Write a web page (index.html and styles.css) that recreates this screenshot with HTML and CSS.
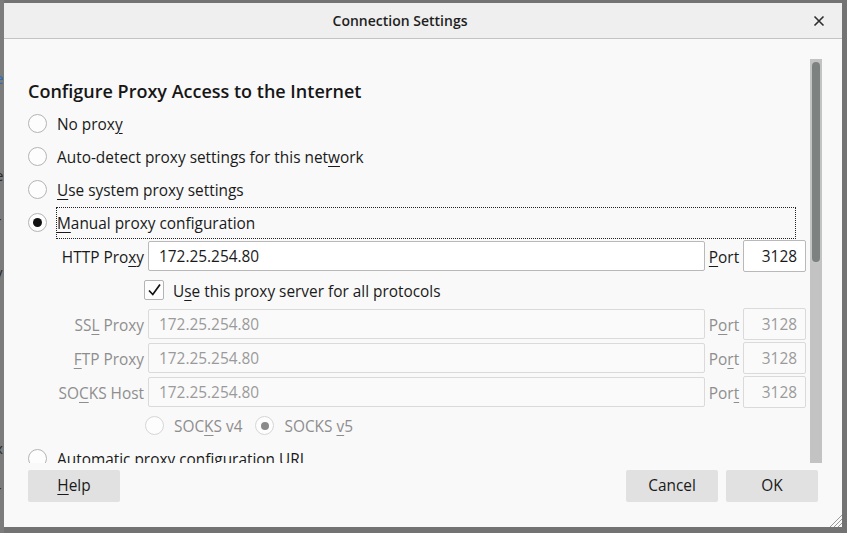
FILE: index.html
```html
<!DOCTYPE html>
<html>
<head>
<meta charset="utf-8">
<link rel="stylesheet" href="styles.css">
</head>
<body>
<div class="backdrop">
  <span class="frag f1">e</span>
  <span class="frag f2">(</span>
  <span class="frag f3">e</span>
  <span class="frag f4">r</span>
  <span class="frag f5">y</span>
  <span class="frag f6">x</span>
  <span class="frag f7">r</span>
</div>
<div class="dialog">
  <div class="titlebar">
    <span class="title">Connection Settings</span>
    <span class="close">
      <svg width="12" height="12" viewBox="0 0 12 12"><path d="M1.5 1.5 L10.5 10.5 M10.5 1.5 L1.5 10.5" stroke="#2e2e2e" stroke-width="1.6" fill="none"/></svg>
    </span>
  </div>
  <div class="body">
    <div class="scroll">
      <div class="content">
        <div class="row heading">Configure Proxy Access to the Internet</div>
        <div class="row"><span class="radio"></span><span class="lbl">No prox<u>y</u></span></div>
        <div class="row"><span class="radio"></span><span class="lbl">Auto-detect proxy settings for this net<u>w</u>ork</span></div>
        <div class="row"><span class="radio"></span><span class="lbl"><u>U</u>se system proxy settings</span></div>
        <div class="row"><span class="radio on"></span><span class="lbl focus"><u>M</u>anual proxy configuration</span></div>
        <div class="field">
          <span class="flabel">HTTP Pro<u>x</u>y</span>
          <span class="host">172.25.254.80</span>
          <span class="plabel"><u>P</u>ort</span>
          <span class="port">3128</span>
        </div>
        <div class="checkrow">
          <span class="check"><svg width="15" height="14" viewBox="0 0 15 14"><path d="M2 7.5 L5.8 11.5 L13 1.5" stroke="#111" stroke-width="1.7" fill="none"/></svg></span>
          <span class="lbl">U<u>s</u>e this proxy server for all protocols</span>
        </div>
        <div class="field dis">
          <span class="flabel">SS<u>L</u> Proxy</span>
          <span class="host">172.25.254.80</span>
          <span class="plabel">P<u>o</u>rt</span>
          <span class="port">3128</span>
        </div>
        <div class="field dis">
          <span class="flabel"><u>F</u>TP Proxy</span>
          <span class="host">172.25.254.80</span>
          <span class="plabel">Po<u>r</u>t</span>
          <span class="port">3128</span>
        </div>
        <div class="field dis">
          <span class="flabel">SO<u>C</u>KS Host</span>
          <span class="host">172.25.254.80</span>
          <span class="plabel">Por<u>t</u></span>
          <span class="port">3128</span>
        </div>
        <div class="socksrow">
          <span class="radio dis"></span><span class="lbl grey">SOC<u>K</u>S v4</span>
          <span class="radio dis ondis"></span><span class="lbl grey">SOCKS <u>v</u>5</span>
        </div>
        <div class="row"><span class="radio"></span><span class="lbl">Automatic proxy configuration URL</span></div>
      </div>
    </div>
    <div class="scrollbar"><div class="thumb"></div></div>
  </div>
  <div class="buttons">
    <button class="btn"><u>H</u>elp</button>
    <span class="spacer"></span>
    <button class="btn">Cancel</button>
    <button class="btn">OK</button>
  </div>
  <div class="grip">
    <svg width="14" height="14" viewBox="0 0 14 14"><path d="M14 2 L2 14 M14 6 L6 14 M14 10 L10 14" stroke="#9a9a9a" stroke-width="1" fill="none"/></svg>
  </div>
</div>
</body>
</html>
```
FILE: styles.css
```css
html, body {
  margin: 0;
  padding: 0;
}
body {
  width: 847px;
  height: 533px;
  background: #737373;
  font-family: "Open Sans", "Noto Sans", sans-serif;
  color: #1a1a1a;
  position: relative;
  overflow: hidden;
}
.backdrop {
  position: absolute;
  left: 0;
  top: 0;
  width: 4px;
  height: 533px;
  background: #7c7c7c;
  overflow: hidden;
}
.frag {
  position: absolute;
  left: -5px;
  font-size: 15px;
  color: #2a2a2a;
  line-height: 16px;
}
.f1 { top: 70px; color: #2a6ab8; }
.f2 { top: 122px; }
.f3 { top: 167px; }
.f4 { top: 213px; }
.f5 { top: 264px; }
.f6 { top: 440px; }
.f7 { top: 482px; }
.dialog {
  position: relative;
  margin: 3px 0 0 4px;
  width: 838px;
  height: 524px;
  background: #f9f9f9;
  display: flex;
  flex-direction: column;
}
.titlebar {
  height: 35px;
  flex: none;
  background: #efefef;
  border-bottom: 1px solid #c3c3c3;
  display: flex;
  align-items: center;
  justify-content: center;
  padding-right: 46px;
  position: relative;
}
.title {
  font-size: 14px;
  font-weight: 600;
  color: #1e1e1e;
}
.close {
  position: absolute;
  right: 17px;
  top: 12px;
  width: 12px;
  height: 12px;
  display: flex;
}
.body {
  flex: none;
  height: 424px;
  display: flex;
}
.scroll {
  flex: 1;
  overflow: hidden;
}
.content {
  padding: 35px 0 0 24px;
  width: 778px;
}
.row {
  height: 33px;
  display: flex;
  align-items: center;
  font-size: 15.4px;
}
.heading {
  font-size: 18px;
  font-weight: 600;
  color: #161616;
}
.radio {
  flex: none;
  width: 17px;
  height: 17px;
  border: 1px solid #b4b4b4;
  border-radius: 50%;
  background: #fdfdfd;
  position: relative;
  margin-right: 10px;
}
.radio.on::after {
  content: "";
  position: absolute;
  left: 4px;
  top: 4px;
  width: 9px;
  height: 9px;
  border-radius: 50%;
  background: #111;
}
.radio.dis {
  border-color: #d6d6d6;
}
.radio.ondis::after {
  content: "";
  position: absolute;
  left: 4.5px;
  top: 4.5px;
  width: 8px;
  height: 8px;
  border-radius: 50%;
  background: #8a8a8a;
}
.lbl {
  font-size: 15.4px;
  white-space: nowrap;
  padding-top: 2px;
}
.lbl u, .flabel u, .plabel u, .btn u {
  text-underline-offset: 3px;
}
.focus {
  width: 738px;
  height: 30px;
  line-height: 28px;
  outline: 1px dotted #222;
  box-sizing: border-box;
}
.field {
  height: 34px;
  display: flex;
  align-items: center;
  font-size: 15.4px;
  margin-left: 29px;
}
.flabel {
  width: 87px;
  text-align: right;
  margin-right: 4px;
  white-space: nowrap;
  padding-top: 2px;
}
.host {
  width: 557px;
  height: 30px;
  box-sizing: border-box;
  border: 1px solid #b9b9b9;
  border-radius: 2px;
  background: #fff;
  padding: 1px 0 0 10px;
  line-height: 28px;
}
.plabel {
  width: 38px;
  text-align: center;
  padding-top: 2px;
}
.port {
  width: 63px;
  height: 32px;
  box-sizing: border-box;
  border: 1px solid #b9b9b9;
  border-radius: 2px;
  background: #fff;
  text-align: right;
  padding: 1px 8px 0 0;
  line-height: 30px;
}
.field.dis {
  color: #8e8e8e;
}
.field.dis .host, .field.dis .port {
  border-color: #dadada;
  background: #fafafa;
  color: #9a9a9a;
}
.checkrow {
  height: 34px;
  display: flex;
  align-items: center;
  margin-left: 116px;
}
.check {
  flex: none;
  width: 18px;
  height: 18px;
  border: 1px solid #b4b4b4;
  border-radius: 2px;
  background: #fdfdfd;
  margin-right: 9px;
  display: flex;
  align-items: center;
  justify-content: center;
}
.socksrow {
  height: 33px;
  display: flex;
  align-items: center;
  margin-left: 117px;
}
.socksrow .lbl {
  margin-right: 13px;
}
.grey {
  color: #8e8e8e;
}
.scrollbar {
  flex: none;
  width: 12px;
  margin: 20px 20px 0 0;
  height: 404px;
  background: #c3c3c3;
  box-sizing: border-box;
  padding: 3px 2px;
}
.thumb {
  height: 200px;
  background: #7d8180;
  border-radius: 4px;
}
.buttons {
  display: flex;
  align-items: flex-start;
  padding: 7px 24px 0 24px;
  gap: 8px;
}
.spacer {
  flex: 1;
}
.btn {
  width: 92px;
  height: 32px;
  border: none;
  border-radius: 2px;
  background: #e1e1e1;
  font-family: "Open Sans", "Noto Sans", sans-serif;
  font-size: 15.4px;
  color: #1a1a1a;
  padding: 0 0 1px 0;
}
.grip {
  position: absolute;
  right: 0;
  bottom: 0;
  width: 14px;
  height: 14px;
  display: flex;
}
```
